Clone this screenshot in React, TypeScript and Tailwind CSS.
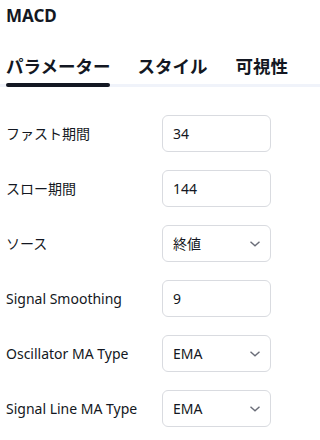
const rows: { label: string; value: string; select?: boolean }[] = [
  { label: "ファスト期間", value: "34" },
  { label: "スロー期間", value: "144" },
  { label: "ソース", value: "終値", select: true },
  { label: "Signal Smoothing", value: "9" },
  { label: "Oscillator MA Type", value: "EMA", select: true },
  { label: "Signal Line MA Type", value: "EMA", select: true },
];

function Chevron() {
  return (
    <svg width="12" height="8" viewBox="0 0 12 8" fill="none" className="text-[#6a6d78]">
      <path d="M1.5 1.8l4.5 4 4.5-4" stroke="currentColor" strokeWidth="1.4" />
    </svg>
  );
}

export default function App() {
  return (
    <div
      className="w-[320px] h-[440px] overflow-hidden bg-white text-[#131722]"
      style={{ fontFamily: '"Noto Sans", "Noto Sans CJK JP", sans-serif' }}
    >
      <div className="px-[6px] pt-[5px] text-[17px] leading-[22px] font-bold">MACD</div>

      <div className="mt-[26px] flex pl-[6px] border-b-[3px] border-[#f0f3fa]">
        <div className="relative pb-[5px] text-[17.5px] leading-[26px] font-bold">
          パラメーター
          <div className="absolute left-0 right-0 -bottom-[3px] h-[4px] rounded-full bg-[#131722]" />
        </div>
        <div className="ml-[27px] pb-[5px] text-[17.5px] leading-[26px] font-bold">スタイル</div>
        <div className="ml-[28px] pb-[5px] text-[17.5px] leading-[26px] font-bold">可視性</div>
      </div>

      <div className="mt-[28px] flex flex-col gap-[18px] px-[6px]">
        {rows.map((r) => (
          <div key={r.label} className="flex items-center">
            <div className="w-[156px] text-[14px]">{r.label}</div>
            <div className="flex h-[37px] w-[109px] items-center justify-between rounded-[6px] border border-[#d9dbe0] pl-[10px] pr-[9px] text-[14px]">
              <span>{r.value}</span>
              {r.select && <Chevron />}
            </div>
          </div>
        ))}
      </div>
    </div>
  );
}
